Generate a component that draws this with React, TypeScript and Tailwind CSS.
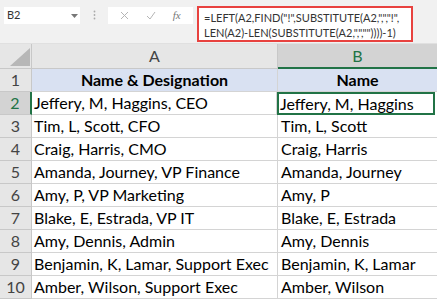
import React from "react";

const rows: [string, string][] = [
  ["Jeffery, M, Haggins, CEO", "Jeffery, M, Haggins"],
  ["Tim, L, Scott, CFO", "Tim, L, Scott"],
  ["Craig, Harris, CMO", "Craig, Harris"],
  ["Amanda, Journey, VP Finance", "Amanda, Journey"],
  ["Amy, P, VP Marketing", "Amy, P"],
  ["Blake, E, Estrada, VP IT", "Blake, E, Estrada"],
  ["Amy, Dennis, Admin", "Amy, Dennis"],
  ["Benjamin, K, Lamar, Support Exec", "Benjamin, K, Lamar"],
  ["Amber, Wilson, Support Exec", "Amber, Wilson"],
];

export default function App() {
  const font = { fontFamily: "Lato, 'Open Sans', sans-serif" };
  return (
    <div className="w-[437px] h-[300px] overflow-hidden bg-white" style={font}>
      {/* toolbar */}
      <div className="h-[44px] bg-[#f1f1f1] flex items-start pt-[6px] pl-[4px] border-b border-[#e0e0e0]">
        <div className="w-[76px] h-[17px] mt-[1px] bg-white flex items-center justify-between pl-[3px] pr-[2px] text-[11px] text-[#333]">
          <span>B2</span>
          <svg width="7" height="4" viewBox="0 0 7 4"><path d="M0 0h7L3.5 4z" fill="#777" /></svg>
        </div>
        <div className="w-[28px] h-[18px] flex items-center justify-center">
          <svg width="3" height="10" viewBox="0 0 3 10">
            <circle cx="1.5" cy="1.5" r="0.9" fill="#aaa" />
            <circle cx="1.5" cy="5" r="0.9" fill="#aaa" />
            <circle cx="1.5" cy="8.5" r="0.9" fill="#aaa" />
          </svg>
        </div>
        <div className="w-[85px] h-[17px] mt-[1px] bg-white flex items-center justify-around px-[4px] text-[#aaa]">
          <svg width="9" height="9" viewBox="0 0 9 9"><path d="M1 1l7 7M8 1L1 8" stroke="#b5b5b5" strokeWidth="1" /></svg>
          <svg width="10" height="9" viewBox="0 0 10 9"><path d="M1 5l3 3 5-7" stroke="#b5b5b5" strokeWidth="1" fill="none" /></svg>
          <span className="text-[11px] italic text-[#777]" style={{ fontFamily: "'Liberation Serif', serif" }}>fx</span>
        </div>
        <div className="ml-[4px] w-[216px] h-[36px] bg-white border-2 border-[#e8423f] pl-[5px] pt-[2px] text-[11px] leading-[15px] text-[#333]">
          <div>=LEFT(A2,FIND("!",SUBSTITUTE(A2,",","!",</div>
          <div>LEN(A2)-LEN(SUBSTITUTE(A2,",",""))))-1)</div>
        </div>
      </div>
      {/* column headers */}
      <div className="flex h-[25px] text-[16px] text-[#444]">
        <div className="w-[32px] bg-[#e6e6e6] border-r border-b border-[#c8c8c8] flex items-end justify-end pr-[1px] pb-[2px]">
          <svg width="20" height="18" viewBox="0 0 20 18"><path d="M20 0V18H0z" fill="#b7b7b7" /></svg>
        </div>
        <div className="w-[246px] bg-[#e6e6e6] border-r border-b border-[#c8c8c8] flex items-center justify-center">A</div>
        <div className="flex-1 bg-[#d3d3d3] border-b-2 border-[#217346] flex items-center justify-center text-[#217346]">B</div>
      </div>
      {/* row 1 */}
      <div className="flex h-[23px] text-[16px] text-black">
        <div className="w-[32px] bg-[#e6e6e6] border-r border-b border-[#c8c8c8] flex items-center justify-center text-[#444]">1</div>
        <div className="w-[246px] bg-[#d9e1f2] border-r border-b border-[#d4d4d4] flex items-center justify-center font-bold">Name &amp; Designation</div>
        <div className="flex-1 bg-[#d9e1f2] border-b border-[#d4d4d4] flex items-center justify-center font-bold">Name</div>
      </div>
      {rows.map(([a, b], i) => {
        const sel = i === 0;
        return (
          <div key={i} className="flex h-[23px] text-[16px] text-black">
            <div
              className={
                sel
                  ? "w-[32px] bg-[#d3d3d3] border-r-2 border-r-[#217346] border-b border-b-[#c8c8c8] flex items-center justify-center text-[#217346]"
                  : "w-[32px] bg-[#e6e6e6] border-r border-b border-[#c8c8c8] flex items-center justify-center text-[#444]"
              }
            >
              {i + 2}
            </div>
            <div className={sel ? "w-[245px] border-r border-b border-[#d4d4d4] flex items-center pl-[2px] whitespace-nowrap overflow-hidden" : "w-[246px] border-r border-b border-[#d4d4d4] flex items-center pl-[2px] whitespace-nowrap overflow-hidden"}>{a}</div>
            <div className={sel ? "w-[158px] border-2 border-[#217346] flex items-center pl-[1px] whitespace-nowrap" : "flex-1 border-b border-[#d4d4d4] flex items-center pl-[3px] whitespace-nowrap"}>{b}</div>
          </div>
        );
      })}
    </div>
  );
}
